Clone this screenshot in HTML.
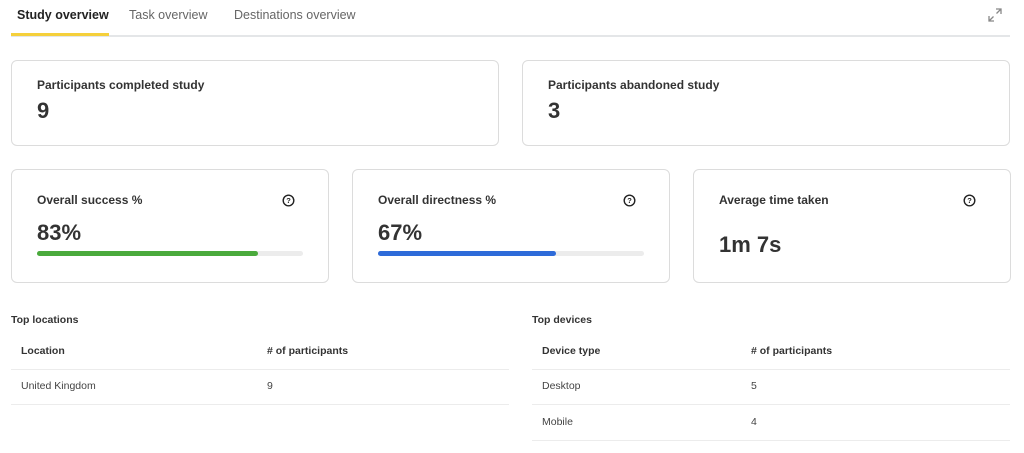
<!DOCTYPE html>
<html><head><style>
*{margin:0;padding:0;box-sizing:border-box}
body{width:1024px;height:453px;background:#fff;font-family:"Liberation Sans",sans-serif;color:#2b2b2b;position:relative;overflow:hidden}
.a{position:absolute}
.tab{position:absolute;top:8px;font-size:12.5px;color:#666}
.card{position:absolute;border:1px solid #dcdcdc;border-radius:6px;background:#fff}
.t{position:absolute;font-size:12px;font-weight:bold;color:#333}
.v{position:absolute;font-size:22px;font-weight:bold;color:#333}
.bar{position:absolute;height:5px;border-radius:3px;background:#ececec}
.bar i{display:block;height:5px;border-radius:3px}
.q{position:absolute;width:13px;height:13px}
.th{position:absolute;font-size:10.5px;font-weight:bold;color:#333}
.td{position:absolute;font-size:10.5px;color:#444}
.ln{position:absolute;height:1px;background:#ececec}
</style></head><body>
<div class="tab" style="left:17px;color:#222;font-weight:bold">Study overview</div>
<div class="tab" style="left:129px">Task overview</div>
<div class="tab" style="left:234px">Destinations overview</div>
<div class="a" style="left:11px;top:35px;width:999px;height:2px;background:#e4e6e8"></div>
<div class="a" style="left:11px;top:33px;width:98px;height:3px;background:#f5d03b"></div>
<svg class="a" style="left:987px;top:7px" width="16" height="16" viewBox="0 0 16 16" fill="none" stroke="#888" stroke-width="1.3"><path d="M9 2h5v5M14 2L9.5 6.5M7 14H2V9M2 14l4.5-4.5"/></svg>

<div class="card" style="left:11px;top:60px;width:488px;height:86px"></div>
<div class="t" style="left:37px;top:78px">Participants completed study</div>
<div class="v" style="left:37px;top:98px">9</div>
<div class="card" style="left:522px;top:60px;width:488px;height:86px"></div>
<div class="t" style="left:548px;top:78px">Participants abandoned study</div>
<div class="v" style="left:548px;top:98px">3</div>

<div class="card" style="left:11px;top:169px;width:318px;height:114px"></div>
<div class="t" style="left:37px;top:193px">Overall success %</div>
<div class="v" style="left:37px;top:220px">83%</div>
<div class="bar" style="left:37px;top:251px;width:266px"><i style="width:221px;background:#4aaa3c"></i></div>
<div class="card" style="left:352px;top:169px;width:318px;height:114px"></div>
<div class="t" style="left:378px;top:193px">Overall directness %</div>
<div class="v" style="left:378px;top:220px">67%</div>
<div class="bar" style="left:378px;top:251px;width:266px"><i style="width:178px;background:#2e6bd9"></i></div>
<div class="card" style="left:693px;top:169px;width:318px;height:114px"></div>
<div class="t" style="left:719px;top:193px">Average time taken</div>
<div class="v" style="left:719px;top:232px">1m 7s</div>

<svg class="q" style="left:282px;top:194px" viewBox="0 0 13 13"><circle cx="6.5" cy="6.5" r="5.3" fill="none" stroke="#222" stroke-width="1.4"/><text x="6.5" y="9.2" font-size="7.5" font-weight="bold" text-anchor="middle" font-family="Liberation Sans" fill="#222">?</text></svg>
<svg class="q" style="left:623px;top:194px" viewBox="0 0 13 13"><circle cx="6.5" cy="6.5" r="5.3" fill="none" stroke="#222" stroke-width="1.4"/><text x="6.5" y="9.2" font-size="7.5" font-weight="bold" text-anchor="middle" font-family="Liberation Sans" fill="#222">?</text></svg>
<svg class="q" style="left:963px;top:194px" viewBox="0 0 13 13"><circle cx="6.5" cy="6.5" r="5.3" fill="none" stroke="#222" stroke-width="1.4"/><text x="6.5" y="9.2" font-size="7.5" font-weight="bold" text-anchor="middle" font-family="Liberation Sans" fill="#222">?</text></svg>

<div class="th" style="left:11px;top:314px">Top locations</div>
<div class="th" style="left:21px;top:345px">Location</div>
<div class="th" style="left:267px;top:345px"># of participants</div>
<div class="ln" style="left:11px;top:369px;width:498px"></div>
<div class="td" style="left:21px;top:380px">United Kingdom</div>
<div class="td" style="left:267px;top:380px">9</div>
<div class="ln" style="left:11px;top:404px;width:498px"></div>

<div class="th" style="left:532px;top:314px">Top devices</div>
<div class="th" style="left:542px;top:345px">Device type</div>
<div class="th" style="left:751px;top:345px"># of participants</div>
<div class="ln" style="left:532px;top:369px;width:478px"></div>
<div class="td" style="left:542px;top:380px">Desktop</div>
<div class="td" style="left:751px;top:380px">5</div>
<div class="ln" style="left:532px;top:404px;width:478px"></div>
<div class="td" style="left:542px;top:416px">Mobile</div>
<div class="td" style="left:751px;top:416px">4</div>
<div class="ln" style="left:532px;top:440px;width:478px"></div>
</body></html>
